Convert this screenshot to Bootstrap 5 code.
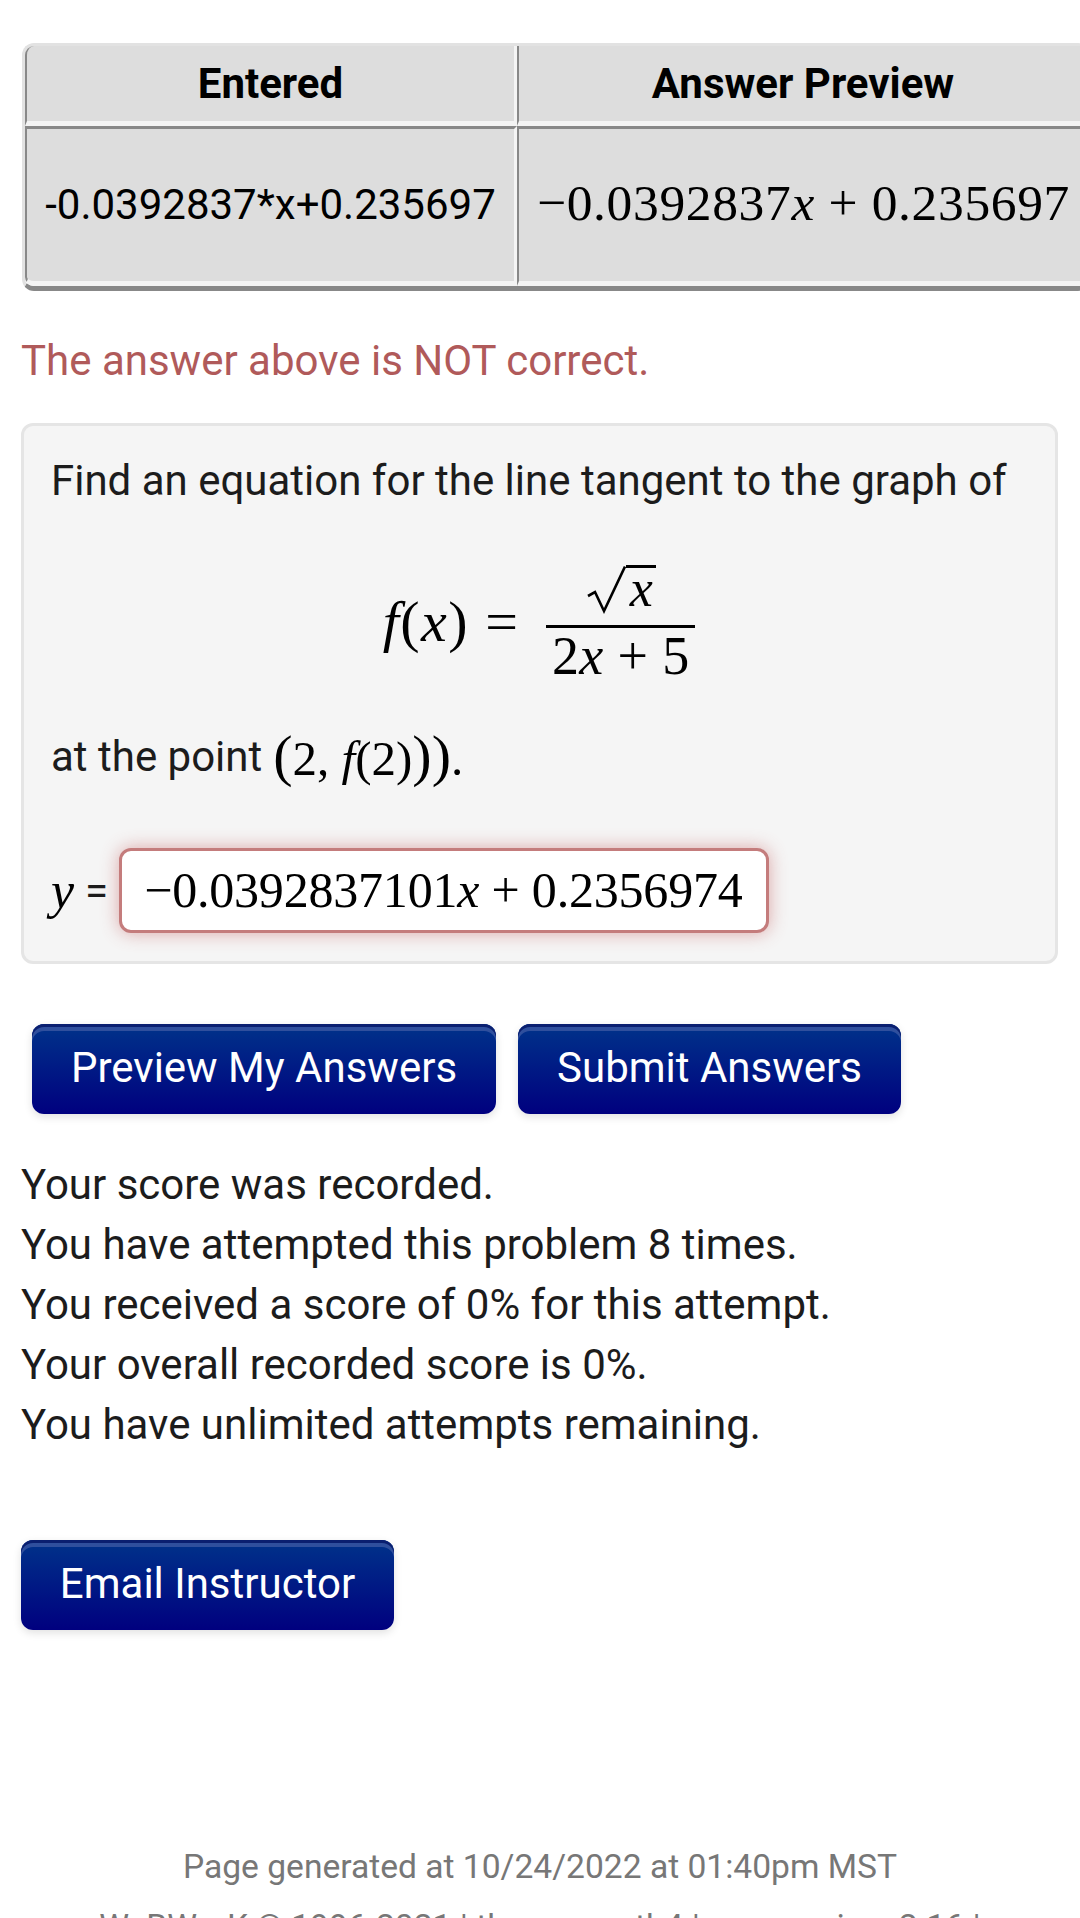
<!DOCTYPE html>
<html lang="en">
<head>
<meta charset="utf-8">
<title>Problem</title>
<link href="https://cdn.jsdelivr.net/npm/bootstrap@5.3.0/dist/css/bootstrap.min.css" rel="stylesheet">
<style>
html,body{height:100%;overflow:hidden;background:#fff}
body{font-family:Roboto,"Liberation Sans",sans-serif;font-size:42px;line-height:60px;color:#1c1c1c}
.sheet{height:1918px;padding:43px 0 0 21px;overflow:hidden}
.math{font-family:"Liberation Serif","DejaVu Serif",serif;color:#000}
.math i{font-style:italic}
.ans-grid{border-collapse:separate;border-spacing:0;table-layout:fixed;width:1068px;margin-left:1px;border-style:solid;border-width:3px 0 5px 3px;border-color:#e2e2e2 #888 #888 #e2e2e2;border-radius:12px;margin-bottom:40px;color:#000}
.ans-grid th,.ans-grid td{background:#ddd;text-align:center;border-style:solid;border-color:#888 #f4f4f4 #f4f4f4 #888;padding:0;white-space:nowrap}
.ans-grid th{height:80px;padding-top:1px;font-weight:700;border-width:0 3px 5px 2px;font-size:42px}
.ans-grid td{height:160px;border-width:3px 3px 5px 2px}
.ans-grid th:first-child{width:492px;border-top-left-radius:9px}
.ans-grid tr:last-child td:first-child{border-bottom-left-radius:9px}
.ans-grid td.math{font-size:51.5px;text-align:left;padding:0 0 4px 18px;letter-spacing:.65px}
.wrong{color:#b05a5a;margin-bottom:32px}
.problem-box{width:1037px;height:541px;background:#f5f5f5;border:3px solid #e5e5e5;border-radius:12px;padding:25px 27px 0}
.disp{height:216px;margin-right:1px;padding-top:6px}
.disp-lhs{font-size:58px;line-height:60px;margin-right:27px;letter-spacing:1.5px}
.frac-box{width:149px;font-size:54px;line-height:56px}
.frac-top{height:67px;border-bottom:3px solid #000;padding-bottom:11px}
.rad-mark{width:41px;height:49px;flex:none}
.sq-x{border-top:3px solid #000;line-height:42px;height:49px;width:30px;text-align:center;font-size:52px}
.frac-bot{letter-spacing:.4px;white-space:nowrap;line-height:56px}
.big-par{font-size:58px;line-height:60px;font-weight:300}
.point-line{height:60px;margin-bottom:61px}
.point-math{font-size:49px;margin-left:11px}
.y-sym{font-size:52px}
.eq-sym{margin:0 11px 0 11px}
.ans-box{width:650px;height:85px;background:#fff;border:3px solid #c47c7c;border-radius:12px;box-shadow:0 0 18px rgba(190,70,70,.45);padding:0 0 0 22px;font-size:50px;line-height:79px;white-space:nowrap;letter-spacing:-.2px}
.navy-btn{background:linear-gradient(#00338a,#00007f);border:0;border-radius:12px;color:#fff;font-size:42px;line-height:60px;height:90px;padding:0 0 2px;box-shadow:inset 0 3px 0 #0a1f70,inset 0 7px 0 #2f4f9d,0 3px 8px rgba(0,0,0,.12);display:flex;align-items:center;justify-content:center}
.navy-btn:hover{color:#fff}
.btn-row{margin:60px 0 41px 11px;gap:22px}
.w-prev{width:464px}
.w-sub{width:383px}
.w-mail{width:373px}
.status-list{margin-bottom:85px}
.foot-note{color:#777;font-size:33.6px;line-height:60px;text-align:center;margin:207px 21px 0 0}
</style>
</head>
<body>
<div class="sheet">
  <table class="ans-grid">
    <tr><th>Entered</th><th>Answer Preview</th></tr>
    <tr><td>-0.0392837*x+0.235697</td><td class="math">−0.0392837<i>x</i> + 0.235697</td></tr>
  </table>

  <div class="wrong">The answer above is NOT correct.</div>

  <div class="problem-box">
    <div>Find an equation for the line tangent to the graph of</div>
    <div class="disp d-flex justify-content-center align-items-center math">
      <div class="disp-lhs"><i>f</i>(<i>x</i>) =</div>
      <div class="frac-box text-center">
        <div class="frac-top d-flex justify-content-center align-items-end">
          <svg class="rad-mark" viewBox="0 0 41 49" aria-hidden="true"><path d="M3 31 L10 27 L19 46 L40 1.5" fill="none" stroke="#000" stroke-width="2.6"/></svg>
          <div class="sq-x"><i>x</i></div>
        </div>
        <div class="frac-bot">2<i>x</i> + 5</div>
      </div>
    </div>
    <div class="point-line d-flex align-items-center">at the point<span class="point-math math"><span class="big-par">(</span>2, <i>f</i>(2)<span class="big-par">)</span><span class="big-par">)</span>.</span></div>
    <div class="d-flex align-items-center">
      <span class="y-sym math"><i>y</i></span><span class="eq-sym">=</span>
      <div class="ans-box math">−0.0392837101<i>x</i> + 0.2356974</div>
    </div>
  </div>

  <div class="d-flex btn-row">
    <button type="button" class="btn navy-btn w-prev">Preview My Answers</button>
    <button type="button" class="btn navy-btn w-sub">Submit Answers</button>
  </div>

  <div class="status-list">
    <div>Your score was recorded.</div>
    <div>You have attempted this problem 8 times.</div>
    <div>You received a score of 0% for this attempt.</div>
    <div>Your overall recorded score is 0%.</div>
    <div>You have unlimited attempts remaining.</div>
  </div>

  <button type="button" class="btn navy-btn w-mail">Email Instructor</button>

  <div class="foot-note">
    <div>Page generated at 10/24/2022 at 01:40pm MST</div>
    <div>WeBWorK © 1996-2021 | theme: math4 | ww_version: 2.16 |</div>
  </div>
</div>
</body>
</html>
